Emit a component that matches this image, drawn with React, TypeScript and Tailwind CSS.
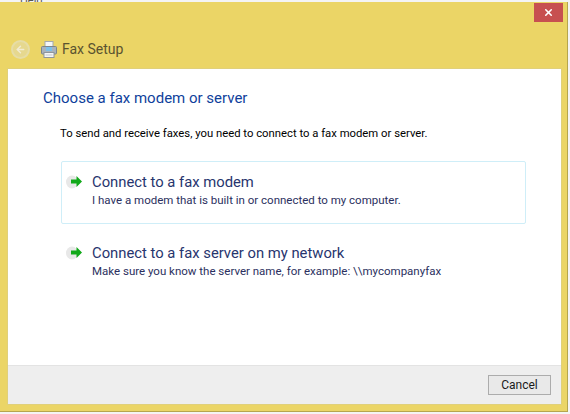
import { ArrowLeft, X } from 'lucide-react';

const FONT = "font-['Roboto','Noto_Sans',sans-serif]";

function PrinterIcon() {
  return (
    <svg width="16" height="17" viewBox="0 0 16 17">
      <rect x="4" y="0.5" width="8" height="6" fill="#f4f6f7" stroke="#a3a9af" />
      <rect x="0.5" y="5.5" width="15" height="7.5" rx="1" fill="#a9b3bc" stroke="#7d858c" />
      <rect x="5" y="6" width="6" height="4" fill="#7cc0ea" />
      <rect x="3" y="11.5" width="10" height="5" fill="#f4f5f6" stroke="#8e959c" />
      <path d="M4.500 14h7" stroke="#c4c9ce" />
    </svg>
  );
}

function GreenArrow() {
  return (
    <svg width="16" height="16" viewBox="0 0 16 16" className="shrink-0">
      <ellipse cx="6" cy="8" rx="6" ry="6.500" fill="#e8e8e8" />
      <path d="M5 5.500h5.500V2l5.500 5.500-5.500 5.500V9.500H5z" fill="#12a91a" />
    </svg>
  );
}

function TaskOption({ title, detail, framed }: { title: string; detail: string; framed?: boolean }) {
  return (
    <div
      className={`flex h-[63px] gap-[10px] rounded-[2px] border pl-[4px] pt-[10px] ${
        framed ? 'border-[#cfeef8]' : 'border-transparent'
      }`}
    >
      <div className="pt-[2px]">
        <GreenArrow />
      </div>
      <div>
        <div className="text-[14.8px] leading-[20px] text-[#27356e]">{title}</div>
        <div className="text-[11.5px] leading-[16px] text-[#2b3060]">{detail}</div>
      </div>
    </div>
  );
}

export default function App() {
  return (
    <div className={`${FONT} h-[414px] w-[570px] overflow-hidden bg-[#f4f4f4]`}>
      <div className="h-[2px] overflow-hidden pl-[20px] text-[11px] leading-[2px] text-[#555555]">Help</div>
      <div className="flex h-[410px] w-[568px] flex-col border-r border-b border-[#b5a64e] bg-[#ebd566] pb-[6px] pl-[7px] pr-[5px]">
        <div className="mr-[-1px] mt-[1px] flex justify-end">
          <div className="flex h-[19px] w-[29px] items-center justify-center bg-[#c75050] text-white">
            <X size={11} strokeWidth={3.5} />
          </div>
        </div>
        <div className="flex h-[46px] items-end pb-[9px] pl-[4px]">
          <div className="flex h-[19px] w-[19px] items-center justify-center rounded-full border-2 border-[#e6dda6] bg-[#e6d88e]">
            <ArrowLeft size={11} strokeWidth={3} className="text-[#f2ecd2]" />
          </div>
          <div className="mb-[1px] ml-[11px]">
            <PrinterIcon />
          </div>
          <span className="ml-[5px] text-[14px] leading-[20px] text-[#5a5330]">Fax Setup</span>
        </div>
        <div className="flex min-h-0 flex-1 flex-col border border-[#e0d07a] bg-white">
          <div className="flex-1 pl-[35px] pr-[35px] pt-[18px]">
            <h1 className="text-[15px] leading-[22px] text-[#0f3f9c]">Choose a fax modem or server</h1>
            <p className="ml-[17px] mt-[17px] text-[11.3px] leading-[16px] text-black">
              To send and receive faxes, you need to connect to a fax modem or server.
            </p>
            <div className="ml-[18px] mt-[19px] flex flex-col gap-[8px]">
              <TaskOption
                framed
                title="Connect to a fax modem"
                detail="I have a modem that is built in or connected to my computer."
              />
              <TaskOption
                title="Connect to a fax server on my network"
                detail="Make sure you know the server name, for example: \\mycompanyfax"
              />
            </div>
          </div>
          <div className="flex h-[39px] items-center justify-end border-t border-[#e3e3e3] bg-[#eeeeee] pr-[10px]">
            <button className="h-[20px] w-[63px] border border-[#acacac] bg-[#e9e9e9] text-[12px] leading-none text-[#1a1a1a]">
              Cancel
            </button>
          </div>
        </div>
      </div>
    </div>
  );
}
